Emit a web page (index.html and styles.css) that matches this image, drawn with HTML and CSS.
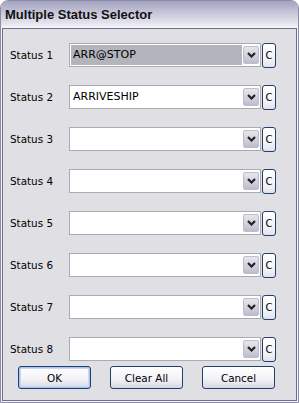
FILE: index.html
```html
<!DOCTYPE html>
<html>
<head>
  <title>Multiple Status Selector</title>
  <link rel="stylesheet" href="styles.css">
</head>
<body>

  <div class="window">
    <div class="titlebar">Multiple Status Selector</div>
    <div class="content">
      <div class="rows">
        <div class="row">
          <span class="label">Status 1</span>
          <div class="combo"><span class="field selected">ARR@STOP</span><span class="drop"><svg width="9" height="6" viewBox="0 0 9 6"><path d="M1 1 L4.5 4.5 L8 1" fill="none" stroke="#222" stroke-width="2.2"/></svg></span></div>
          <button class="clear">C</button>
        </div>
        <div class="row">
          <span class="label">Status 2</span>
          <div class="combo"><span class="field">ARRIVESHIP</span><span class="drop"><svg width="9" height="6" viewBox="0 0 9 6"><path d="M1 1 L4.5 4.5 L8 1" fill="none" stroke="#222" stroke-width="2.2"/></svg></span></div>
          <button class="clear">C</button>
        </div>
        <div class="row">
          <span class="label">Status 3</span>
          <div class="combo"><span class="field"></span><span class="drop"><svg width="9" height="6" viewBox="0 0 9 6"><path d="M1 1 L4.5 4.5 L8 1" fill="none" stroke="#222" stroke-width="2.2"/></svg></span></div>
          <button class="clear">C</button>
        </div>
        <div class="row">
          <span class="label">Status 4</span>
          <div class="combo"><span class="field"></span><span class="drop"><svg width="9" height="6" viewBox="0 0 9 6"><path d="M1 1 L4.5 4.5 L8 1" fill="none" stroke="#222" stroke-width="2.2"/></svg></span></div>
          <button class="clear">C</button>
        </div>
        <div class="row">
          <span class="label">Status 5</span>
          <div class="combo"><span class="field"></span><span class="drop"><svg width="9" height="6" viewBox="0 0 9 6"><path d="M1 1 L4.5 4.5 L8 1" fill="none" stroke="#222" stroke-width="2.2"/></svg></span></div>
          <button class="clear">C</button>
        </div>
        <div class="row">
          <span class="label">Status 6</span>
          <div class="combo"><span class="field"></span><span class="drop"><svg width="9" height="6" viewBox="0 0 9 6"><path d="M1 1 L4.5 4.5 L8 1" fill="none" stroke="#222" stroke-width="2.2"/></svg></span></div>
          <button class="clear">C</button>
        </div>
        <div class="row">
          <span class="label">Status 7</span>
          <div class="combo"><span class="field"></span><span class="drop"><svg width="9" height="6" viewBox="0 0 9 6"><path d="M1 1 L4.5 4.5 L8 1" fill="none" stroke="#222" stroke-width="2.2"/></svg></span></div>
          <button class="clear">C</button>
        </div>
        <div class="row">
          <span class="label">Status 8</span>
          <div class="combo"><span class="field"></span><span class="drop"><svg width="9" height="6" viewBox="0 0 9 6"><path d="M1 1 L4.5 4.5 L8 1" fill="none" stroke="#222" stroke-width="2.2"/></svg></span></div>
          <button class="clear">C</button>
        </div>
      </div>
      <div class="actions">
        <button class="btn default">OK</button>
        <button class="btn">Clear All</button>
        <button class="btn">Cancel</button>
      </div>
    </div>
  </div>

</body>
</html>
```

FILE: styles.css
```css
body {
  margin: 0;
  background-color: #ffffff;
  font-family: "DejaVu Sans", sans-serif;
  font-size: 10.4px;
  color: #000;
}

.window {
  width: 297px;
  height: 401px;
  border: 1px solid #8d8ca6;
  border-radius: 8px 8px 0 0;
  background-color: #f4f4f8; /* thin light line of the frame */
  display: flex;
  flex-direction: column;
  overflow: hidden;
}

.titlebar {
  height: 27px;
  padding-left: 4px;
  line-height: 27px;
  font-family: "Liberation Sans", sans-serif;
  font-weight: bold;
  font-size: 13px;
  color: #111;
  background: linear-gradient(#a3a2bf, #c4c3d7 40%, #e6e6ef 85%, #f6f6fa);
}

.content {
  flex: 1;
  margin: 0 1px 1px 1px;
  border: 1px solid #6f6e8c;
  background-color: #e0dfe3; /* silver dialog face */
  display: flex;
  flex-direction: column;
  padding: 14px 0 0 7px;
}

.rows {
  display: flex;
  flex-direction: column;
  gap: 18px;
}

.row {
  display: flex;
  align-items: center;
  height: 24px;
}

.label {
  width: 59px;
}

.combo {
  width: 188px;
  height: 20px;
  border: 1px solid #a5acb2;
  background-color: #fff;
  padding: 1px;
  display: flex;
}

.field {
  flex: 1;
  padding-left: 2px;
  line-height: 20px;
  font-size: 11px;
}

.field.selected {
  background-color: #b3b4bc;
  margin-right: 1px;
}

.drop {
  width: 16px;
  height: 18px;
  margin-top: 1px;
  border: 1px solid #bdbccd;
  border-radius: 2px;
  background: linear-gradient(#e6e6ee, #cfcfdc 60%, #bcbcce);
  display: flex;
  justify-content: center;
  align-items: center;
  box-sizing: border-box;
}

.clear {
  margin-left: 1px;
  width: 14px;
  height: 25px;
  padding: 0;
  border: 1px solid #1e3f70;
  border-radius: 3px;
  background: linear-gradient(#ffffff, #f5f5f8 60%, #e2e2ea);
  font-family: "DejaVu Sans", sans-serif;
  font-size: 10px;
  color: #000;
}

.actions {
  display: flex;
  gap: 19px;
  margin-top: 5px;
  padding-left: 8px;
}

.btn {
  width: 73px;
  height: 23px;
  padding: 0;
  border: 1px solid #1e3f70;
  border-radius: 3px;
  background: linear-gradient(#ffffff, #f3f3f7 55%, #e2e2ea 85%, #d4d4de);
  font-family: "DejaVu Sans", sans-serif;
  font-size: 10.4px;
  color: #000;
}

.btn.default {
  box-shadow: inset 0 0 0 1px #a9c3ee, inset 0 0 0 2px #cad9f3;
}
```
